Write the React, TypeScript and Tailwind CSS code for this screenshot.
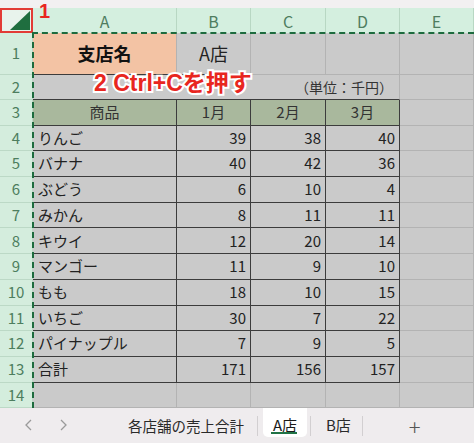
import React from 'react';

const FONT = "font-['Noto_Sans_CJK_JP','Noto_Sans',sans-serif]";

const COLS = ['A', 'B', 'C', 'D', 'E'];
const COL_W = ['w-[144px]', 'w-[74px]', 'w-[75px]', 'w-[74px]', 'w-[74px]'];

const DATA: [string, number, number, number][] = [
  ['りんご', 39, 38, 40],
  ['バナナ', 40, 42, 36],
  ['ぶどう', 6, 10, 4],
  ['みかん', 8, 11, 11],
  ['キウイ', 12, 20, 14],
  ['マンゴー', 11, 9, 10],
  ['もも', 18, 10, 15],
  ['いちご', 30, 7, 22],
  ['パイナップル', 7, 9, 5],
  ['合計', 171, 156, 157],
];

function RowHead({ n, h }: { n: number; h: string }) {
  return (
    <div
      className={`${h} w-[33px] shrink-0 bg-[#d4eddd] border-r border-b border-[#bcd9c6] text-[#4d7e5e] text-[15px] flex items-center justify-center`}
    >
      {n}
    </div>
  );
}

// gray gridline cell (outside the table)
function Blank({ w }: { w: string }) {
  return <div className={`${w} shrink-0 bg-[#cacaca] border-r border-b border-[#b3b3b3]`} />;
}

export default function App() {
  const rowH = 'h-[25.7px]';

  return (
    <div className={`w-[474px] h-[443px] overflow-hidden flex flex-col bg-[#f2f0f1] text-[#222] ${FONT}`}>
      {/* strip above the headers */}
      <div className="h-[8px] shrink-0 bg-[#f2f0f1]" />

      <div className="relative shrink-0">
        {/* column headers */}
        <div className="flex h-[25px]">
          <div className="w-[33px] shrink-0 bg-[#e8f3ec] border-2 border-[#e23b36] relative">
            <svg className="absolute right-[1px] bottom-[1px]" width="20" height="19" viewBox="0 0 20 19">
              <polygon points="20,0 20,19 0,19" fill="#1f6e3f" />
            </svg>
          </div>
          {COLS.map((c, i) => (
            <div
              key={c}
              className={`${COL_W[i]} shrink-0 bg-[#d4efdf] border-r border-[#b8d7c3] flex items-center justify-center text-[16px] text-[#4f7d5f]`}
            >
              {c}
            </div>
          ))}
        </div>

        {/* row 1 */}
        <div className="flex h-[42px]">
          <RowHead n={1} h="h-[42px]" />
          <div className="w-[144px] shrink-0 bg-[#f3c3a4] border-r border-r-[#b3b3b3] border-b border-b-[#3c3c3c] flex items-center justify-center text-[18px] font-bold text-[#111]">
            支店名
          </div>
          <div className="w-[74px] shrink-0 bg-[#cacaca] border-r border-r-[#b3b3b3] border-b border-b-[#3c3c3c] flex items-center justify-center text-[18px] text-[#222]">
            A店
          </div>
          <Blank w="w-[75px]" />
          <Blank w="w-[74px]" />
          <Blank w="w-[74px]" />
        </div>

        {/* row 2 */}
        <div className="flex h-[25px]">
          <RowHead n={2} h="h-[25px]" />
          <div className="w-[367px] shrink-0 bg-[#cacaca] border-r border-r-[#b3b3b3] border-b border-b-[#3c3c3c] flex items-center justify-end pr-[6px] text-[14px] text-[#333]">
            （単位：千円）
          </div>
          <Blank w="w-[74px]" />
        </div>

        {/* row 3: table header */}
        <div className={`flex ${rowH}`}>
          <RowHead n={3} h={rowH} />
          {['商品', '1月', '2月', '3月'].map((t, i) => (
            <div
              key={t}
              className={`${COL_W[i]} shrink-0 bg-[#a9b89d] border-r border-b border-[#3c3c3c] flex items-center justify-center text-[15px] text-[#333]`}
            >
              {t}
            </div>
          ))}
          <Blank w="w-[74px]" />
        </div>

        {/* rows 4-13 */}
        {DATA.map((r, idx) => (
          <div key={r[0]} className={`flex ${rowH}`}>
            <RowHead n={idx + 4} h={rowH} />
            <div className="w-[144px] shrink-0 bg-[#cacaca] border-r border-b border-[#3c3c3c] flex items-center pl-[5px] text-[15px] text-[#222]">
              {r[0]}
            </div>
            {[r[1], r[2], r[3]].map((v, i) => (
              <div
                key={i}
                className={`${COL_W[i + 1]} shrink-0 bg-[#cacaca] border-r border-b border-[#3c3c3c] flex items-center justify-end pr-[4px] text-[15px] text-[#222]`}
              >
                {v}
              </div>
            ))}
            <Blank w="w-[74px]" />
          </div>
        ))}

        {/* row 14 */}
        <div className={`flex ${rowH}`}>
          <RowHead n={14} h={rowH} />
          <Blank w="w-[144px]" />
          <Blank w="w-[74px]" />
          <Blank w="w-[75px]" />
          <Blank w="w-[74px]" />
          <Blank w="w-[74px]" />
        </div>

        {/* copy marquee */}
        <div className="absolute left-[32px] top-[24px] right-0 bottom-0 border-t-2 border-l-2 border-dashed border-[#1d6b3e] pointer-events-none" />

        {/* annotations */}
        <div className="absolute left-[39px] top-[-7px] text-[20px] leading-none font-bold text-[#e8261f] font-['Liberation_Sans',sans-serif]">
          1
        </div>
        <div className="absolute left-[94px] top-[64px] text-[23px] leading-none font-bold text-[#e8261f] font-['Liberation_Sans','Noto_Sans_CJK_JP',sans-serif] [-webkit-text-stroke:4px_#ffffff] [paint-order:stroke_fill] whitespace-nowrap">
          2 Ctrl+Cを押す
        </div>
      </div>

      {/* sheet tabs */}
      <div className="flex-1 flex items-center bg-[#efecee] relative">
        <svg className="absolute left-[23px] top-[9px]" width="12" height="16" viewBox="0 0 12 16">
          <polyline points="8,3 3,8 8,13" fill="none" stroke="#9a9a9a" strokeWidth="1.3" />
        </svg>
        <svg className="absolute left-[57px] top-[9px]" width="12" height="16" viewBox="0 0 12 16">
          <polyline points="4,3 9,8 4,13" fill="none" stroke="#9a9a9a" strokeWidth="1.3" />
        </svg>
        <div className="ml-[128px] text-[14.5px] text-[#2a2a2a] whitespace-nowrap">各店舗の売上合計</div>
        <div className="ml-[13px] w-px h-[20px] bg-[#d2cfd1]" />
        <div className="ml-[5px] self-start h-[29px] w-[44px] bg-white rounded-b-[5px] flex flex-col items-center justify-center relative">
          <span className="text-[15px] text-[#1a1a1a] leading-none mt-[3px]">A店</span>
          <div className="absolute bottom-[3px] left-[8px] right-[10px] h-[2px] bg-[#217346]" />
        </div>
        <div className="ml-[3px] w-px h-[20px] bg-[#d2cfd1]" />
        <div className="ml-[15px] text-[15px] text-[#2a2a2a]">B店</div>
        <div className="ml-[11px] w-px h-[20px] bg-[#d2cfd1]" />
        <div className="ml-[46px] text-[22px] font-light text-[#555] leading-none">+</div>
      </div>
    </div>
  );
}
